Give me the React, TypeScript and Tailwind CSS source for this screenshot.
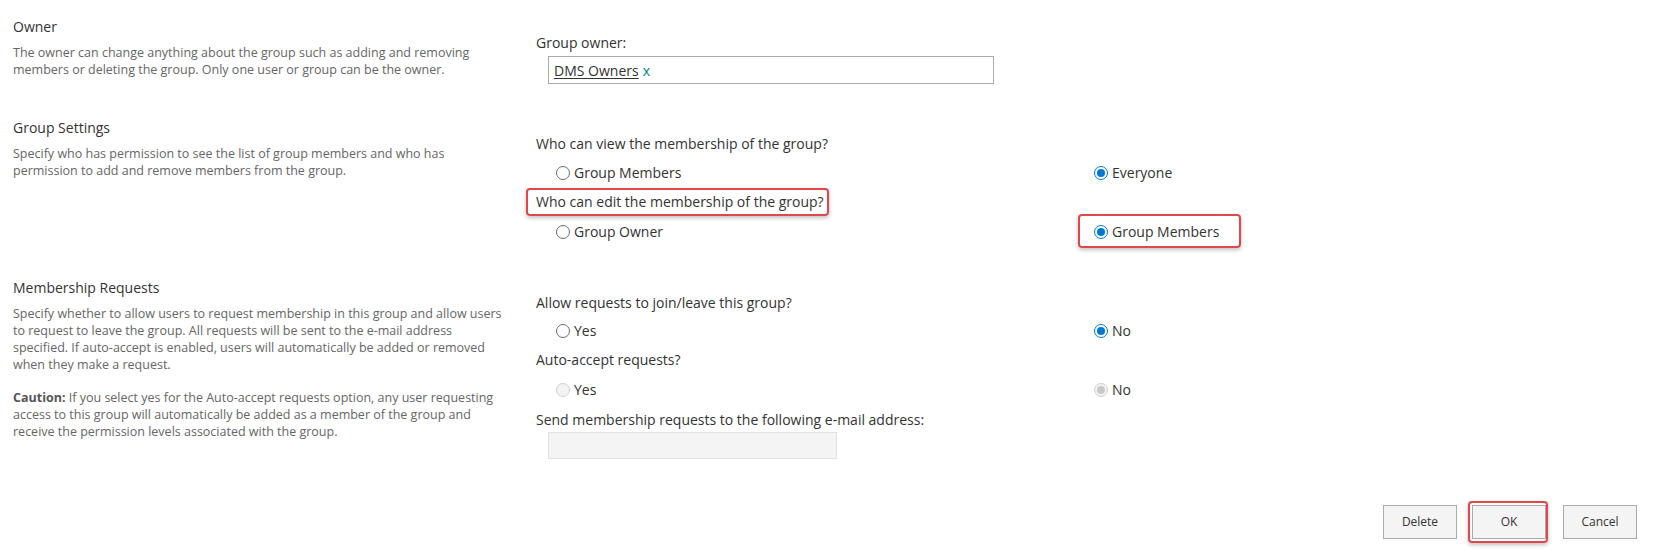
import React from "react";

const FONT = { fontFamily: '"Open Sans", "Noto Sans", sans-serif' };

function Radio({ checked, disabled }: { checked?: boolean; disabled?: boolean }) {
  if (disabled) {
    return (
      <span className="inline-flex h-[14px] w-[14px] shrink-0 items-center justify-center rounded-full border border-[#d0d0d0] bg-[#f3f3f3]">
        {checked && <span className="h-[8px] w-[8px] rounded-full bg-[#c8c8c8]" />}
      </span>
    );
  }
  if (checked) {
    return (
      <span className="inline-flex h-[14px] w-[14px] shrink-0 items-center justify-center rounded-full border border-[#0078d4] bg-white">
        <span className="h-[8px] w-[8px] rounded-full bg-[#0078d4]" />
      </span>
    );
  }
  return <span className="inline-block h-[14px] w-[14px] shrink-0 rounded-full border border-[#6b6b6b] bg-white" />;
}

function Option({
  label,
  checked,
  disabled,
  highlight,
}: {
  label: string;
  checked?: boolean;
  disabled?: boolean;
  highlight?: boolean;
}) {
  return (
    <div className="relative flex h-[20px] items-center gap-[4px]">
      <Radio checked={checked} disabled={disabled} />
      <span className="text-[14px] leading-[20px] text-[#333]">{label}</span>
      {highlight && (
        <span className="pointer-events-none absolute -left-[16px] -right-[22px] -top-[8px] -bottom-[6px] rounded-[4px] border-2 border-[#e0474c] shadow-[0_2px_4px_rgba(0,0,0,0.25)]" />
      )}
    </div>
  );
}

function RadioRow({
  left,
  right,
  className,
}: {
  left: React.ReactNode;
  right: React.ReactNode;
  className?: string;
}) {
  return (
    <div className={"flex h-[20px] items-center pl-[20px] " + (className ?? "")}>
      <div className="flex w-[538px]">{left}</div>
      <div className="flex">{right}</div>
    </div>
  );
}

function Label({ children, className }: { children: React.ReactNode; className?: string }) {
  return <div className={"h-[20px] whitespace-nowrap text-[14px] leading-[20px] text-[#333] " + (className ?? "")}>{children}</div>;
}

const DESC = "whitespace-nowrap text-[12.5px] leading-[17px] text-[#666]";

export default function App() {
  return (
    <div className="h-[550px] w-[1657px] overflow-hidden bg-white" style={FONT}>
      {/* Owner */}
      <div className="flex pt-[17px]">
        <div className="w-[536px] shrink-0 pl-[13px]">
          <div className="h-[20px] text-[14px] leading-[20px] text-[#333]">Owner</div>
          <div className={"mt-[7px] " + DESC}>
            <div>The owner can change anything about the group such as adding and removing</div>
            <div>members or deleting the group. Only one user or group can be the owner.</div>
          </div>
        </div>
        <div className="pt-[16px]">
          <Label>Group owner:</Label>
          <div className="ml-[12px] mt-[3px] flex h-[28px] w-[446px] items-center border border-[#ababab] px-[5px] text-[14px]">
            <span className="text-[#333] underline underline-offset-2">DMS Owners</span>
            <span className="ml-[4px] text-[#038387]">x</span>
          </div>
        </div>
      </div>

      {/* Group Settings */}
      <div className="mt-[34px] flex">
        <div className="w-[536px] shrink-0 pl-[13px]">
          <div className="h-[20px] text-[14px] leading-[20px] text-[#333]">Group Settings</div>
          <div className={"mt-[7px] " + DESC}>
            <div>Specify who has permission to see the list of group members and who has</div>
            <div>permission to add and remove members from the group.</div>
          </div>
        </div>
        <div className="flex-1 pt-[16px]">
          <Label>Who can view the membership of the group?</Label>
          <RadioRow className="mt-[9px]" left={<Option label="Group Members" />} right={<Option label="Everyone" checked />} />
          <div className="mt-[5px] flex h-[28px]">
            <div className="relative flex items-center">
              <span className="whitespace-nowrap text-[14px] leading-[20px] text-[#333]">Who can edit the membership of the group?</span>
              <span className="pointer-events-none absolute -left-[10px] -right-[5px] top-0 bottom-0 rounded-[4px] border-2 border-[#e0474c] shadow-[0_2px_4px_rgba(0,0,0,0.25)]" />
            </div>
          </div>
          <RadioRow className="mt-[6px]" left={<Option label="Group Owner" />} right={<Option label="Group Members" checked highlight />} />
        </div>
      </div>

      {/* Membership Requests */}
      <div className="mt-[36px] flex">
        <div className="w-[536px] shrink-0 pl-[13px]">
          <div className="h-[20px] text-[14px] leading-[20px] text-[#333]">Membership Requests</div>
          <div className={"mt-[7px] " + DESC}>
            <div>Specify whether to allow users to request membership in this group and allow users</div>
            <div>to request to leave the group. All requests will be sent to the e-mail address</div>
            <div>specified. If auto-accept is enabled, users will automatically be added or removed</div>
            <div>when they make a request.</div>
          </div>
          <div className={"mt-[16px] " + DESC}>
            <div>
              <span className="font-bold text-[#555]">Caution:</span> If you select yes for the Auto-accept requests option, any user requesting
            </div>
            <div>access to this group will automatically be added as a member of the group and</div>
            <div>receive the permission levels associated with the group.</div>
          </div>
        </div>
        <div className="flex-1 pt-[15px]">
          <Label>Allow requests to join/leave this group?</Label>
          <RadioRow className="mt-[8px]" left={<Option label="Yes" />} right={<Option label="No" checked />} />
          <Label className="mt-[9px]">Auto-accept requests?</Label>
          <RadioRow className="mt-[10px]" left={<Option label="Yes" disabled />} right={<Option label="No" checked disabled />} />
          <Label className="mt-[10px]">Send membership requests to the following e-mail address:</Label>
          <div className="ml-[12px] mt-[2px] h-[27px] w-[289px] border border-[#e1e1e1] bg-[#f4f4f4]" />
        </div>
      </div>

      {/* Buttons */}
      <div className="mt-[46px] flex justify-end pr-[20px]">
        <button className="h-[34px] w-[74px] border border-[#ababab] bg-[#f4f4f4] text-[12px] text-[#333]">Delete</button>
        <div className="relative ml-[15px] flex">
          <button className="h-[34px] w-[74px] border border-[#ababab] bg-[#f4f4f4] text-[12px] text-[#333]">OK</button>
          <span className="pointer-events-none absolute -left-[4px] -right-[2px] -top-[4px] -bottom-[4px] rounded-[4px] border-2 border-[#e0474c] shadow-[0_2px_4px_rgba(0,0,0,0.25)]" />
        </div>
        <button className="ml-[17px] h-[34px] w-[74px] border border-[#ababab] bg-[#f4f4f4] text-[12px] text-[#333]">Cancel</button>
      </div>
    </div>
  );
}
